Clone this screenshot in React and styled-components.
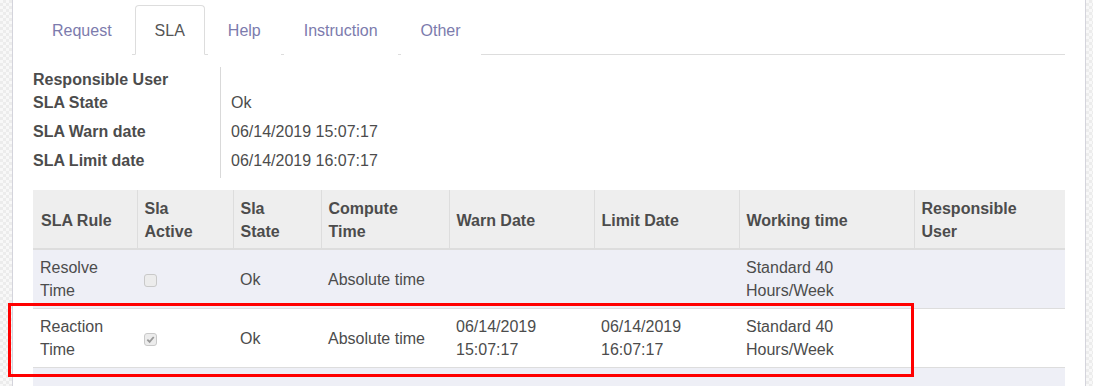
import React from 'react';
import styled, { createGlobalStyle } from 'styled-components';

const GlobalStyle = createGlobalStyle`
  html, body {
    margin: 0;
    padding: 0;
    background: #fff;
  }
  body {
    font-family: "Liberation Sans", Arial, sans-serif;
    font-size: 16px;
    color: #4c4c4c;
  }
`;

const Page = styled.div`
  display: flex;
  height: 386px;
  overflow: hidden;
  position: relative;
`;

const Gutter = styled.div`
  flex: 0 0 ${p => p.w}px;
  background-color: #f6f6f6;
  background-image: repeating-conic-gradient(#ececec 0% 25%, #f8f8f8 0% 50%);
  background-size: 6px 6px;
  border-left: ${p => (p.side === 'right' ? '1px solid #d4d4dc' : 'none')};
  border-right: ${p => (p.side === 'left' ? '1px solid #d4d4dc' : 'none')};
`;

const Sheet = styled.div`
  flex: 1;
  padding: 0 20px;
  background: #fff;
`;

const TabBar = styled.ul`
  list-style: none;
  margin: 5px 0 0;
  padding: 0;
  display: flex;
  gap: 3px;
  border-bottom: 1px solid #ddd;
  & > li:first-child {
    margin-left: -1px;
  }
`;

const Tab = styled.li`
  padding: 14px 19px 12px;
  line-height: 22px;
  margin-bottom: -1px;
  border: 1px solid ${p => (p.active ? '#ddd' : 'transparent')};
  border-bottom-color: ${p => (p.active ? '#fff' : 'transparent')};
  border-radius: 4px 4px 0 0;
  background: #fff;
  color: ${p => (p.active ? '#555' : '#7c7bad')};
  cursor: pointer;
`;

const FieldGroup = styled.div`
  display: grid;
  grid-template-columns: 188px 1fr;
  margin-top: 12px;
  line-height: 23px;
`;

const Label = styled.div`
  font-weight: bold;
  color: #4c4c4c;
  border-right: 1px solid #d9d9d9;
  padding-top: ${p => (p.first ? 1 : 0)}px;
  padding-bottom: ${p => (p.first ? 0 : 6)}px;
`;

const Value = styled.div`
  padding-left: 10px;
  color: #4c4c4c;
  padding-top: ${p => (p.first ? 1 : 0)}px;
  padding-bottom: ${p => (p.first ? 0 : 6)}px;
`;

const Table = styled.table`
  width: 100%;
  margin-top: 12px;
  border-collapse: collapse;
  table-layout: fixed;
  line-height: 23px;
`;

const Th = styled.th`
  background: #eee;
  text-align: left;
  vertical-align: middle;
  font-weight: bold;
  color: #4c4c4c;
  padding: 7px 7px 5px;
  border-left: 1px solid #ddd;
  border-bottom: 2px solid #ddd;
  &:first-child {
    border-left: none;
    padding-left: 8px;
  }
`;

const Row = styled.tr`
  background: ${p => (p.odd ? '#eeeff6' : '#fff')};
  border-top: 1px solid #ddd;
`;

const Td = styled.td`
  padding: 6px 7px;
  vertical-align: middle;
  color: #4c4c4c;
  height: 46px;
`;

const Check = styled.span`
  display: inline-flex;
  align-items: center;
  justify-content: center;
  width: 13px;
  height: 13px;
  border: 1px solid #c9c9c9;
  border-radius: 3px;
  background: #ececec;
  box-sizing: border-box;
  vertical-align: middle;
`;

const Highlight = styled.div`
  position: absolute;
  left: 8px;
  top: 303px;
  width: 906px;
  height: 74px;
  border: 3px solid #f00;
  box-sizing: border-box;
  pointer-events: none;
`;

const tabs = ['Request', 'SLA', 'Help', 'Instruction', 'Other'];

const fields = [
  { label: 'Responsible User', value: '' },
  { label: 'SLA State', value: 'Ok' },
  { label: 'SLA Warn date', value: '06/14/2019 15:07:17' },
  { label: 'SLA Limit date', value: '06/14/2019 16:07:17' },
];

const columns = [
  { title: ['SLA Rule'], w: 104 },
  { title: ['Sla', 'Active'], w: 96 },
  { title: ['Sla', 'State'], w: 88 },
  { title: ['Compute', 'Time'], w: 128 },
  { title: ['Warn Date'], w: 145 },
  { title: ['Limit Date'], w: 145 },
  { title: ['Working time'], w: 175 },
  { title: ['Responsible', 'User'], w: 151 },
];

const rows = [
  { rule: 'Resolve Time', active: false, state: 'Ok', compute: 'Absolute time', warn: '', limit: '', working: 'Standard 40 Hours/Week', user: '' },
  { rule: 'Reaction Time', active: true, state: 'Ok', compute: 'Absolute time', warn: '06/14/2019 15:07:17', limit: '06/14/2019 16:07:17', working: 'Standard 40 Hours/Week', user: '' },
  { rule: '', active: null, state: '', compute: '', warn: '', limit: '', working: '', user: '' },
];

function Checkbox({ checked }) {
  return (
    <Check>
      {checked && (
        <svg width="9" height="9" viewBox="0 0 10 10">
          <path d="M1.5 5.2 L4 7.6 L8.6 2.2" fill="none" stroke="#999" strokeWidth="2" />
        </svg>
      )}
    </Check>
  );
}

export default function App() {
  return (
    <Page>
      <GlobalStyle />
      <Gutter w={12} side="left" />
      <Sheet>
        <TabBar>
          {tabs.map(t => (
            <Tab key={t} active={t === 'SLA'}>{t}</Tab>
          ))}
        </TabBar>
        <FieldGroup>
          {fields.map((f, i) => (
            <React.Fragment key={f.label}>
              <Label first={i === 0}>{f.label}</Label>
              <Value first={i === 0}>{f.value}</Value>
            </React.Fragment>
          ))}
        </FieldGroup>
        <Table>
          <colgroup>
            {columns.map(c => <col key={c.title.join(' ')} style={{ width: c.w }} />)}
          </colgroup>
          <thead>
            <tr>
              {columns.map(c => (
                <Th key={c.title.join(' ')}>
                  {c.title.map((line, i) => (
                    <React.Fragment key={line}>
                      {i > 0 && <br />}
                      {line}
                    </React.Fragment>
                  ))}
                </Th>
              ))}
            </tr>
          </thead>
          <tbody>
            {rows.map((r, i) => (
              <Row key={i} odd={i % 2 === 0}>
                <Td>{r.rule}</Td>
                <Td>{r.active !== null && <Checkbox checked={r.active} />}</Td>
                <Td>{r.state}</Td>
                <Td>{r.compute}</Td>
                <Td>{r.warn}</Td>
                <Td>{r.limit}</Td>
                <Td>{r.working}</Td>
                <Td>{r.user}</Td>
              </Row>
            ))}
          </tbody>
        </Table>
      </Sheet>
      <Gutter w={9} side="right" />
      <Highlight />
    </Page>
  );
}
